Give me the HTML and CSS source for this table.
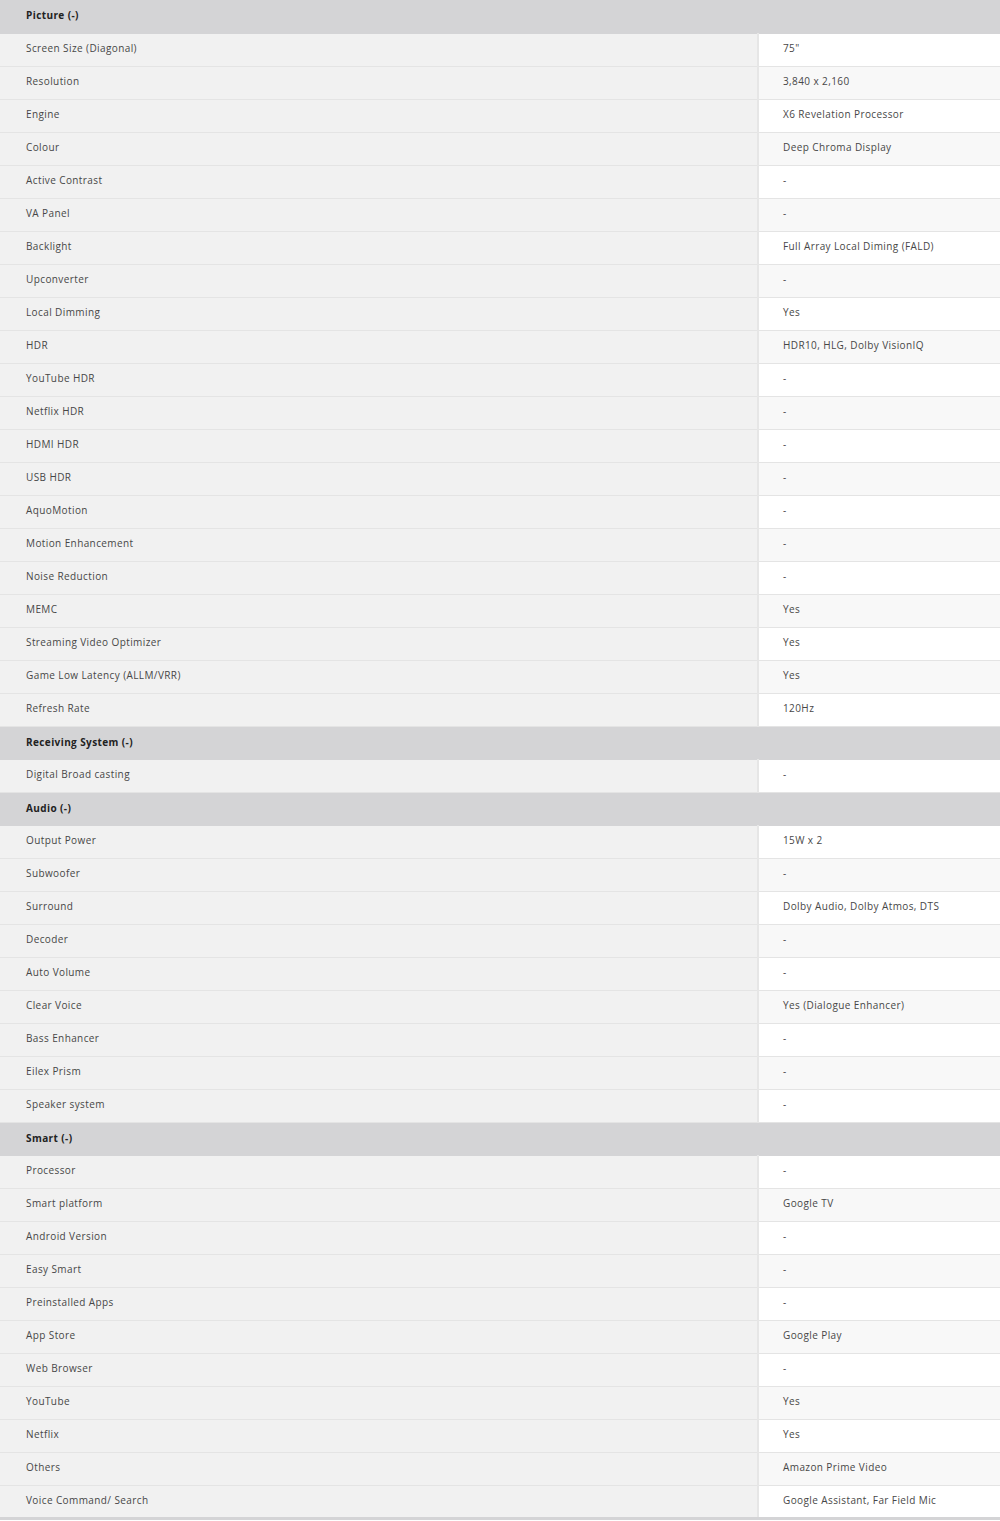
FILE: index.html
```html
<!DOCTYPE html>
<html lang="en">
  <head>
    <meta charset="UTF-8" />
    <meta name="viewport" content="width=device-width, initial-scale=1.0" />
    <title>Specifications</title>
    <link rel="stylesheet" href="styles.css">
  </head>
  <body>
    <table class="spec-table">
      <colgroup>
        <col class="spec-name" />
        <col class="spec-value" />
      </colgroup>
      <!-- Picture -->
      <tbody>
        <tr class="spec-group"><th colspan="2">Picture (-)</th></tr>
        <tr><td>Screen Size (Diagonal)</td><td>75"</td></tr>
        <tr><td>Resolution</td><td>3,840 x 2,160</td></tr>
        <tr><td>Engine</td><td>X6 Revelation Processor</td></tr>
        <tr><td>Colour</td><td>Deep Chroma Display</td></tr>
        <tr><td>Active Contrast</td><td>-</td></tr>
        <tr><td>VA Panel</td><td>-</td></tr>
        <tr><td>Backlight</td><td>Full Array Local Diming (FALD)</td></tr>
        <tr><td>Upconverter</td><td>-</td></tr>
        <tr><td>Local Dimming</td><td>Yes</td></tr>
        <tr><td>HDR</td><td>HDR10, HLG, Dolby VisionIQ</td></tr>
        <tr><td>YouTube HDR</td><td>-</td></tr>
        <tr><td>Netflix HDR</td><td>-</td></tr>
        <tr><td>HDMI HDR</td><td>-</td></tr>
        <tr><td>USB HDR</td><td>-</td></tr>
        <tr><td>AquoMotion</td><td>-</td></tr>
        <tr><td>Motion Enhancement</td><td>-</td></tr>
        <tr><td>Noise Reduction</td><td>-</td></tr>
        <tr><td>MEMC</td><td>Yes</td></tr>
        <tr><td>Streaming Video Optimizer</td><td>Yes</td></tr>
        <tr><td>Game Low Latency (ALLM/VRR)</td><td>Yes</td></tr>
        <tr><td>Refresh Rate</td><td>120Hz</td></tr>
      </tbody>
      <!-- Receiving System -->
      <tbody>
        <tr class="spec-group"><th colspan="2">Receiving System (-)</th></tr>
        <tr><td>Digital Broad casting</td><td>-</td></tr>
      </tbody>
      <!-- Audio -->
      <tbody>
        <tr class="spec-group"><th colspan="2">Audio (-)</th></tr>
        <tr><td>Output Power</td><td>15W x 2</td></tr>
        <tr><td>Subwoofer</td><td>-</td></tr>
        <tr><td>Surround</td><td>Dolby Audio, Dolby Atmos, DTS</td></tr>
        <tr><td>Decoder</td><td>-</td></tr>
        <tr><td>Auto Volume</td><td>-</td></tr>
        <tr><td>Clear Voice</td><td>Yes (Dialogue Enhancer)</td></tr>
        <tr><td>Bass Enhancer</td><td>-</td></tr>
        <tr><td>Eilex Prism</td><td>-</td></tr>
        <tr><td>Speaker system</td><td>-</td></tr>
      </tbody>
      <!-- Smart -->
      <tbody>
        <tr class="spec-group"><th colspan="2">Smart (-)</th></tr>
        <tr><td>Processor</td><td>-</td></tr>
        <tr><td>Smart platform</td><td>Google TV</td></tr>
        <tr><td>Android Version</td><td>-</td></tr>
        <tr><td>Easy Smart</td><td>-</td></tr>
        <tr><td>Preinstalled Apps</td><td>-</td></tr>
        <tr><td>App Store</td><td>Google Play</td></tr>
        <tr><td>Web Browser</td><td>-</td></tr>
        <tr><td>YouTube</td><td>Yes</td></tr>
        <tr><td>Netflix</td><td>Yes</td></tr>
        <tr><td>Others</td><td>Amazon Prime Video</td></tr>
        <tr><td>Voice Command/ Search</td><td>Google Assistant, Far Field Mic</td></tr>
      </tbody>
    </table>
  </body>
</html>
```

FILE: styles.css
```css
* {
  margin: 0;
  padding: 0;
  box-sizing: border-box;
}
body {
  background-color: #ffffff;
  font-family: "Open Sans", "Noto Sans", sans-serif;
  color: #474747;
}
.spec-table {
  width: 100%;
  border-collapse: collapse;
  table-layout: fixed;
  border-bottom: 3px solid #d4d4d6;
}
.spec-name {
  width: 758px;
}
.spec-table td,
.spec-table th {
  height: 33px;
  padding: 0 0 3px 26px;
  font-size: 10px;
  letter-spacing: 0.4px;
  text-align: left;
  vertical-align: middle;
  border-bottom: 1px solid #e4e4e4;
}
.spec-table td:first-child {
  background-color: #f1f1f1;
  border-right: 2px solid #e6e6e6;
}
.spec-table td:last-child {
  padding-left: 24px;
  background-color: #ffffff;
}
.spec-table tr:nth-child(odd) td:last-child {
  background-color: #f8f8f8;
}
.spec-group th {
  padding-bottom: 2px;
  background-color: #d4d4d6;
  color: #222222;
  font-weight: 700;
  border-bottom: 1px solid #d4d4d6;
}
```
